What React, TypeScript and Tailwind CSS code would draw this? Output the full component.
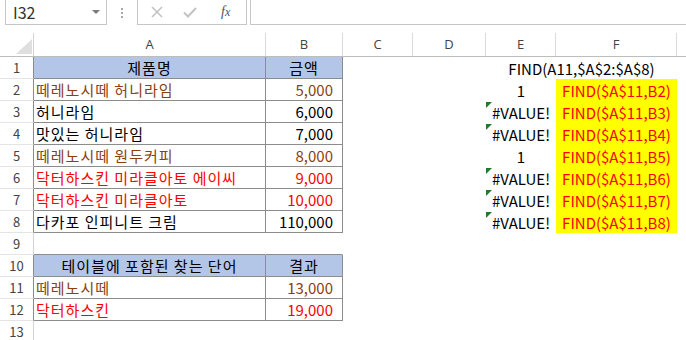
import React from 'react';

const KR = { fontFamily: '"Noto Sans CJK KR", "Noto Sans", sans-serif' };

type Row = {
    n: number;
    a?: string;
    b?: string;
    color?: string;
    head?: boolean;
    table?: boolean;
    aboveTable?: boolean;
    e?: string;
    err?: boolean;
    f?: string;
};

const BROWN = 'text-[#8c400f]';
const RED = 'text-[#ff0000]';

const rows: Row[] = [
    { n: 1, a: '제품명', b: '금액', head: true, table: true },
    { n: 2, a: '떼레노시떼 허니라임', b: '5,000', color: BROWN, table: true, e: '1', f: 'FIND($A$11,B2)' },
    { n: 3, a: '허니라임', b: '6,000', table: true, e: '#VALUE!', err: true, f: 'FIND($A$11,B3)' },
    { n: 4, a: '맛있는 허니라임', b: '7,000', table: true, e: '#VALUE!', err: true, f: 'FIND($A$11,B4)' },
    { n: 5, a: '떼레노시떼 원두커피', b: '8,000', color: BROWN, table: true, e: '1', f: 'FIND($A$11,B5)' },
    { n: 6, a: '닥터하스킨 미라클아토 에이씨', b: '9,000', color: RED, table: true, e: '#VALUE!', err: true, f: 'FIND($A$11,B6)' },
    { n: 7, a: '닥터하스킨 미라클아토', b: '10,000', color: RED, table: true, e: '#VALUE!', err: true, f: 'FIND($A$11,B7)' },
    { n: 8, a: '다카포 인피니트 크림', b: '110,000', table: true, e: '#VALUE!', err: true, f: 'FIND($A$11,B8)' },
    { n: 9, aboveTable: true },
    { n: 10, a: '테이블에 포함된 찾는 단어', b: '결과', head: true, table: true },
    { n: 11, a: '떼레노시떼', b: '13,000', color: BROWN, table: true },
    { n: 12, a: '닥터하스킨', b: '19,000', color: RED, table: true },
    { n: 13 },
];

const cols = [
    { k: 'A', w: 'w-[232px]' },
    { k: 'B', w: 'w-[77px]' },
    { k: 'C', w: 'w-[70px]' },
    { k: 'D', w: 'w-[73px]' },
    { k: 'E', w: 'w-[70px]' },
    { k: 'F', w: 'w-[121px]' },
];

const ErrMark = () => (
    <svg width="6" height="6" viewBox="0 0 6 6" className="absolute left-0 top-[1px]">
        <polygon points="0,0 6,0 0,6" fill="#1f7a2a" />
    </svg>
);

const SheetRow: React.FC<{ r: Row }> = ({ r }) => {
    const lined = r.table || r.aboveTable;
    const bottom = lined ? 'border-b border-b-[#8c8c8c]' : 'border-b border-b-transparent';
    const side = r.table ? 'border-r border-r-[#8c8c8c]' : 'border-r border-r-transparent';
    const txt = r.color ?? 'text-black';
    return (
        <div className="flex h-[22px]">
            <div
                className={`w-[34px] shrink-0 flex items-center justify-center border-b border-b-[#e4e4e4] border-r text-[13px] text-[#444] ${r.table ? 'border-r-[#8c8c8c]' : 'border-r-[#d4d4d4]'}`}
            >
                {r.n}
            </div>
            <div
                className={`w-[232px] shrink-0 flex items-center ${side} ${bottom} ${r.head ? 'bg-[#b4c6e7] justify-center' : 'pl-[2px]'} ${txt}`}
            >
                <span className="text-[15px] leading-none whitespace-nowrap tracking-[1px]">{r.a}</span>
            </div>
            <div
                className={`w-[77px] shrink-0 flex items-center ${side} ${bottom} ${r.head ? 'bg-[#b4c6e7] justify-center tracking-[1px]' : 'justify-end pr-[9px]'} ${txt}`}
            >
                <span className="text-[15px] leading-none whitespace-nowrap">{r.b}</span>
            </div>
            <div className="w-[70px] shrink-0" />
            <div className="w-[73px] shrink-0" />
            {r.n === 1 ? (
                <div className="w-[191px] shrink-0 flex items-center justify-center text-[15px] leading-none text-black whitespace-nowrap">
                    FIND(A11,$A$2:$A$8)
                </div>
            ) : (
                <>
                    <div className="relative w-[70px] shrink-0 flex items-center justify-center text-[15px] leading-none text-black whitespace-nowrap">
                        {r.err && <ErrMark />}
                        {r.e}
                    </div>
                    <div
                        className={`w-[121px] shrink-0 flex items-center justify-center text-[15px] leading-none whitespace-nowrap ${r.f ? 'bg-[#ffff00] text-[#ff0000]' : ''}`}
                    >
                        {r.f}
                    </div>
                </>
            )}
            <div className="flex-1" />
        </div>
    );
};

export default function App() {
    return (
        <div className="w-[686px] h-[340px] overflow-hidden bg-white" style={KR}>
            {/* formula bar */}
            <div className="flex h-[25px]">
                <div className="ml-[5px] w-[102px] h-[25px] border-x border-b border-[#c6c6c6] flex items-center justify-between pl-[7px] pr-[6px]">
                    <span className="text-[16px] leading-none text-[#333]">I32</span>
                    <svg width="8" height="5" viewBox="0 0 8 5">
                        <polygon points="0,0 8,0 4,4" fill="#7a7a7a" />
                    </svg>
                </div>
                <div className="w-[30px] flex flex-col items-center justify-center gap-[2px]">
                    <div className="w-[2px] h-[2px] bg-[#a8a8a8]" />
                    <div className="w-[2px] h-[2px] bg-[#a8a8a8]" />
                    <div className="w-[2px] h-[2px] bg-[#a8a8a8]" />
                </div>
                <div className="w-[110px] h-[25px] border-x border-b border-[#c6c6c6] flex items-center">
                    <svg width="12" height="12" viewBox="0 0 12 12" className="ml-[13px]">
                        <path d="M1 1 L11 11 M11 1 L1 11" stroke="#c3c3c3" strokeWidth="1.6" />
                    </svg>
                    <svg width="14" height="11" viewBox="0 0 14 11" className="ml-[20px]">
                        <path d="M1 5.5 L5 9.5 L13 1" stroke="#c3c3c3" strokeWidth="2" fill="none" />
                    </svg>
                    <span
                        className="ml-[24px] text-[14px] italic leading-none text-[#555]"
                        style={{ fontFamily: '"Liberation Serif", serif' }}
                    >
                        f<span className="text-[12px]">x</span>
                    </span>
                </div>
                <div className="ml-[3px] flex-1 h-[25px] border-l border-b border-[#c6c6c6]" />
            </div>
            <div className="h-[8px]" />
            {/* column headers */}
            <div className="flex h-[24px] border-b border-[#bdbdbd]">
                <div className="relative w-[34px] shrink-0 border-r border-[#d4d4d4]">
                    <svg width="16" height="15" viewBox="0 0 16 15" className="absolute left-[16px] top-[6px]">
                        <polygon points="16,0 16,15 0,15" fill="#dfdfdf" />
                    </svg>
                </div>
                {cols.map((c) => (
                    <div
                        key={c.k}
                        className={`${c.w} shrink-0 flex items-center justify-center border-r border-[#dadada] text-[13px] text-[#444]`}
                        style={{ fontFamily: '"Open Sans", sans-serif' }}
                    >
                        {c.k}
                    </div>
                ))}
                <div className="flex-1" />
            </div>
            {rows.map((r) => (
                <SheetRow key={r.n} r={r} />
            ))}
        </div>
    );
}
